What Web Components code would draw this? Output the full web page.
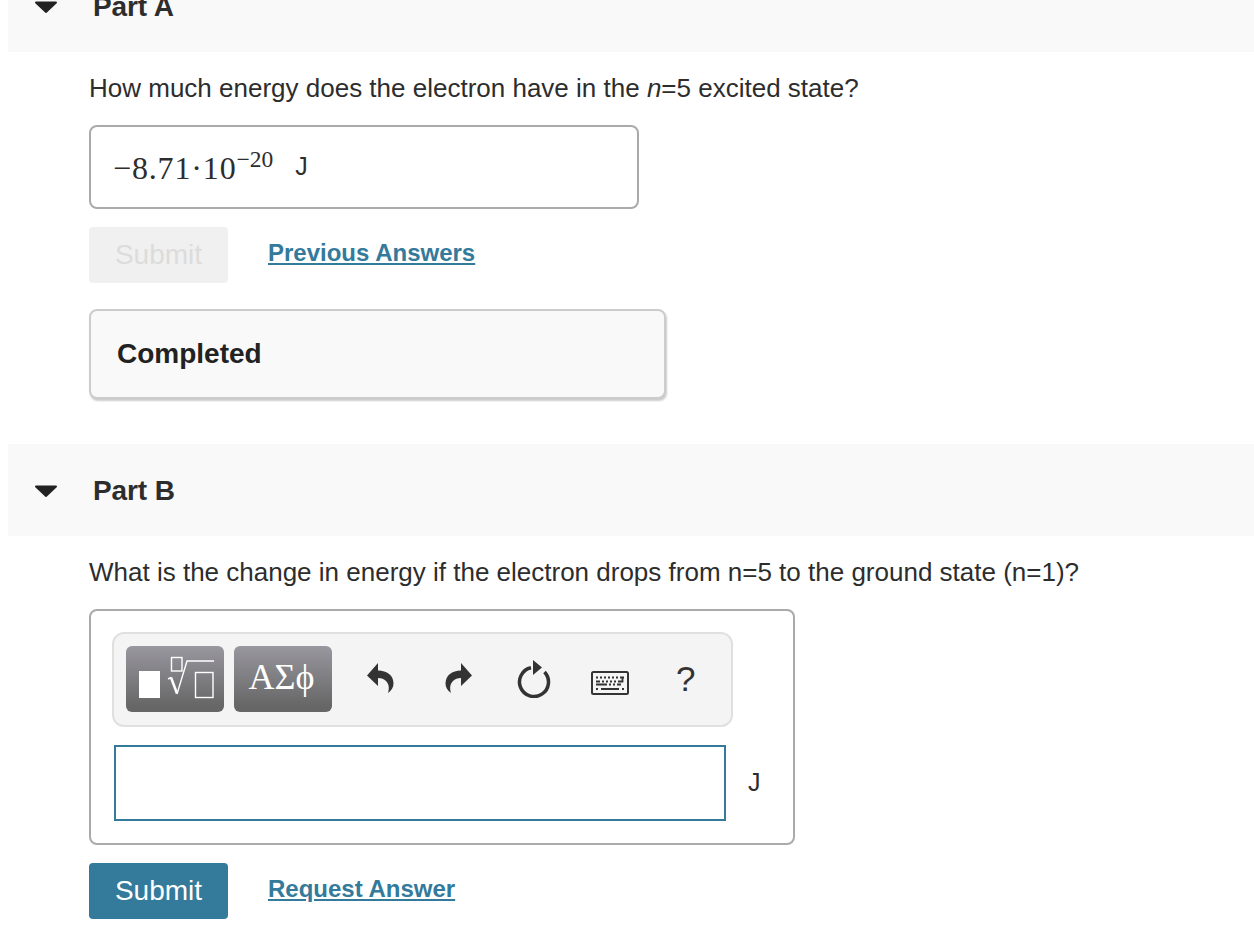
<!DOCTYPE html>
<html>
<head>
<meta charset="utf-8">
<style>
  html, body { margin: 0; padding: 0; overflow: hidden; height: 946px; background: #fff; }
  body { font-family: "Liberation Sans", Arial, sans-serif; color: #2d2d2d; font-size: 26px; }
  q-sheet { margin-top: -40px; margin-left: 8px; }
</style>
</head>
<body>
<q-sheet>
  <q-part label="Part A">
    <q-prompt>How much energy does the electron have in the <i>n</i>=5 excited state?</q-prompt>
    <q-answer></q-answer>
    <q-actions disabled link="Previous Answers"></q-actions>
    <q-note>Completed</q-note>
  </q-part>
  <q-part label="Part B" style="margin-top:45px">
    <q-prompt>What is the change in energy if the electron drops from n=5 to the ground state (n=1)?</q-prompt>
    <q-editor></q-editor>
    <q-actions link="Request Answer"></q-actions>
  </q-part>
</q-sheet>

<script>
class QSheet extends HTMLElement {
  connectedCallback() {
    this.attachShadow({ mode: "open" }).innerHTML = `
      <style>:host { display: block; }</style>
      <slot></slot>`;
  }
}

class QPart extends HTMLElement {
  connectedCallback() {
    this.attachShadow({ mode: "open" }).innerHTML = `
      <style>
        :host { display: block; }
        header {
          box-sizing: border-box; height: 92px; padding-top: 2px; background: #f9f9f9;
          display: flex; align-items: center;
          font-weight: bold; font-size: 28px; letter-spacing: -0.1px; color: #2d2d2d;
        }
        svg { margin-left: 27px; width: 22px; height: 12px; margin-right: 36px; }
        .body { padding-left: 81px; }
      </style>
      <header>
        <svg viewBox="0 0 22 12"><path d="M1 0.5h20a1 1 0 0 1 .7 1.700l-9.800 9.400a1.300 1.300 0 0 1-1.800 0L.3 2.200A1 1 0 0 1 1 .5z" fill="#222"/></svg>
        <span>${this.getAttribute("label")}</span>
      </header>
      <div class="body"><slot></slot></div>`;
  }
}

class QPrompt extends HTMLElement {
  connectedCallback() {
    this.attachShadow({ mode: "open" }).innerHTML = `
      <style>
        :host { display: block; height: 73px; padding-top: 20px; box-sizing: border-box;
                line-height: 32px; font-size: 26px; color: #2d2d2d; white-space: nowrap; }
      </style>
      <slot></slot>`;
  }
}

class QAnswer extends HTMLElement {
  connectedCallback() {
    this.attachShadow({ mode: "open" }).innerHTML = `
      <style>
        :host { display: flex; align-items: center; box-sizing: border-box;
                width: 550px; height: 84px; border: 2px solid #aaa; border-radius: 8px;
                padding-left: 22px; background: #fff; }
        .m { font-family: "Liberation Serif", "Times New Roman", serif; font-size: 32px; letter-spacing: 0.85px;
             color: #2d2d2d; white-space: nowrap; margin-top: 3px; }
        sup { font-size: 23.5px; letter-spacing: 0; line-height: 0; vertical-align: 12px; }
        .u { font-size: 25px; margin-left: 22px; color: #2d2d2d; margin-bottom: 2px; }
      </style>
      <span class="m">&minus;8.71&middot;10<sup>&minus;20</sup></span><span class="u">J</span>`;
  }
}

class QActions extends HTMLElement {
  connectedCallback() {
    const off = this.hasAttribute("disabled");
    this.attachShadow({ mode: "open" }).innerHTML = `
      <style>
        :host { display: flex; align-items: center; gap: 40px; margin-top: 18px; height: 56px; }
        button {
          width: 139px; height: 56px; border: 0; border-radius: 4px; padding: 0;
          font: 28px "Liberation Sans", Arial, sans-serif;
          background: ${off ? "#f0f0f0" : "#337a9b"}; color: ${off ? "#dcdcdc" : "#fff"};
        }
        a { color: #337a9b; font-weight: bold; font-size: 24px; text-decoration: underline; margin-bottom: 4px; }
      </style>
      <button>Submit</button><a>${this.getAttribute("link")}</a>`;
  }
}

class QNote extends HTMLElement {
  connectedCallback() {
    this.attachShadow({ mode: "open" }).innerHTML = `
      <style>
        :host { display: flex; align-items: center; box-sizing: border-box;
                width: 577px; height: 90px; margin-top: 26px; padding-left: 26px;
                background: #f9f9f9; border: 2px solid #ccc; border-radius: 8px;
                box-shadow: 1px 2px 2px #ccc;
                font-weight: bold; font-size: 28px; color: #222; }
      </style>
      <slot></slot>`;
  }
}

class QEditor extends HTMLElement {
  connectedCallback() {
    this.attachShadow({ mode: "open" }).innerHTML = `
      <style>
        :host { display: block; box-sizing: border-box; width: 706px; height: 236px;
                border: 2px solid #aaa; border-radius: 8px; background: #fff; padding: 21px 0 0 21px; }
        .tools {
          box-sizing: border-box; width: 621px; height: 95px;
          display: flex; align-items: center;
          background: #f4f4f4; border: 2px solid #e0e0e0; border-radius: 12px;
          padding: 0 0 1px 12px;
        }
        .tpl {
          box-sizing: border-box; width: 98px; height: 66px; border-radius: 6px; margin-right: 10px;
          background: linear-gradient(#99979f, #666 92%);
          display: flex; align-items: center; justify-content: center; color: #fff;
          font: 36px "Liberation Serif", serif; white-space: nowrap; flex: none;
        }
        .sym { padding: 0 3px 5px 0; }
        svg { display: block; flex: none; }
        .row { display: flex; align-items: center; margin-top: 18px; margin-left: 2px; }
        .box { box-sizing: border-box; width: 612px; height: 76px; border: 2px solid #337a9b; }
        .j { font-size: 25px; margin-left: 22px; color: #2d2d2d; margin-bottom: 2px; }
        .q { font: 35px "Liberation Sans", sans-serif; color: #333; margin-left: 47px; margin-top: -1px; }
      </style>
      <div class="tools">
        <div class="tpl">
          <svg width="98" height="66" viewBox="0 0 98 66" fill="none" stroke="#fff">
            <rect x="13" y="25" width="21" height="27" fill="#fff" stroke="none"/>
            <rect x="45.500" y="11.500" width="10.500" height="13.500" stroke-width="1.400"/>
            <path d="M42 33l3-1.500" stroke-width="1.400"/>
            <path d="M45 31.500l6 16" stroke-width="2.600"/>
            <path d="M51 48l10-33h27" stroke-width="1.400"/>
            <rect x="69.500" y="26.500" width="17.500" height="25" stroke-width="1.400"/>
          </svg>
        </div>
        <div class="tpl sym">A&Sigma;&#981;</div>
        <svg style="margin-left:24px;margin-bottom:4px" width="30" height="34" viewBox="0 0 30 34"><path d="M1 15.500 12 3v7.500c9 0 15.500 5 15.500 13 0 4-2 7-5.500 9.500 1.500-5 1-9-2-12-2-2-4.500-3-8-3v8z" fill="#333"/></svg>
        <svg style="margin-left:47px;margin-bottom:4px" width="30" height="34" viewBox="0 0 30 34"><path d="M29 15.500 18 3v7.500c-9 0-15.500 5-15.500 13 0 4 2 7 5.500 9.500-1.500-5-1-9 2-12 2-2 4.500-3 8-3v8z" fill="#333"/></svg>
        <svg style="margin-left:43px" width="36" height="38" viewBox="0 0 36 38" fill="none"><path d="M15 7.800a14.500 14.500 0 1 0 13.500 4.200" stroke="#333" stroke-width="3.500"/><path d="M17 0l9 7.500-9 7.500z" fill="#333"/></svg>
        <svg style="margin-left:39px;margin-top:8px" width="38" height="24" viewBox="0 0 38 24" fill="none" stroke="#333">
          <rect x="1" y="1" width="36" height="22" rx="1.500" stroke-width="2"/>
          <path d="M5 6.500h2M9 6.500h2M13 6.500h2M17 6.500h2M21 6.500h2M25 6.500h2M29 6.500h4M31.500 6.500v5M5 10.500h4M11 10.500h2M15 10.500h2M19 10.500h2M23 10.500h2M27 10.500h5M5 13.500h11M18 13.500h2M22 13.500h2M26 13.500h4M5 18h2M10 18h18M31 18h2" stroke-width="1.800"/>
        </svg>
        <span class="q">?</span>
      </div>
      <div class="row"><div class="box"></div><span class="j">J</span></div>`;
  }
}

customElements.define("q-sheet", QSheet);
customElements.define("q-part", QPart);
customElements.define("q-prompt", QPrompt);
customElements.define("q-answer", QAnswer);
customElements.define("q-actions", QActions);
customElements.define("q-note", QNote);
customElements.define("q-editor", QEditor);
</script>
</body>
</html>
